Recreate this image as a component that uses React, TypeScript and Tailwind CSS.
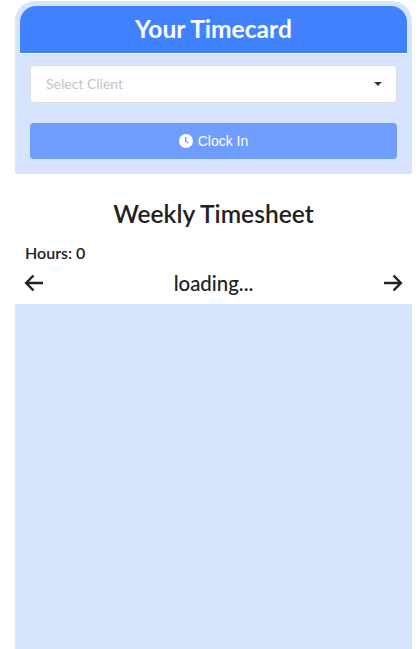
function ClockIcon() {
  return (
    <svg viewBox="0 0 14 14" className="w-[14px] h-[14px]">
      <circle cx="7" cy="7" r="7" fill="#fff" />
      <path d="M6 3v4.6l3 1.9 .7-1.1L7.4 7V3z" fill="#6f9dff" />
    </svg>
  )
}

function Arrow({ flip }: { flip?: boolean }) {
  return (
    <svg viewBox="0 0 20 18" className={flip ? "w-[20px] h-[18px] -scale-x-100" : "w-[20px] h-[18px]"}>
      <path d="M19 9H3M9.5 1.5 2.2 9l7.3 7.5" fill="none" stroke="#212121" strokeWidth="2.5" />
    </svg>
  )
}

export default function App() {
  return (
    <div className="h-[649px] overflow-hidden bg-white pl-[15px] pr-[7px] font-['Lato',sans-serif]">
      <div className="mt-px">
        <section className="pt-[5px] px-[5px] bg-[#d7e4fe] rounded-t-[20px] h-[173px]">
          <h1 className="h-[47px] pb-[1px] flex items-center justify-center rounded-t-[16px] bg-[#3f81ff] text-white text-[24.6px] font-bold">
            Your Timecard
          </h1>
          <div className="h-px bg-white" />
          <div className="px-[10px] pt-[11px]">
            <div className="h-[38px] pb-[2px] flex items-center justify-between pl-[15px] pr-[14px] bg-white border border-[#dedede] rounded-[3px] text-[14px] text-[#c2c2c2]">
              <span>Select Client</span>
              <span className="mt-[2px] w-0 h-0 border-x-[4px] border-x-transparent border-t-[4px] border-t-[#333]" />
            </div>
            <button className="mt-[20px] w-full h-[36px] flex items-center justify-center gap-[5px] rounded-[4px] bg-[#6f9dff] text-white text-[14px] font-['Liberation_Sans',sans-serif]">
              <ClockIcon />
              Clock In
            </button>
          </div>
        </section>

        <h2 className="mt-[25px] text-center text-[24.6px] leading-[30px] font-semibold text-[#212121]">Weekly Timesheet</h2>
        <p className="mt-[14px] pl-[10px] text-[16px] leading-[20px] font-semibold text-[#212121]">Hours: 0</p>
        <div className="mt-[1px] h-[40px] pb-[2px] flex items-center justify-between px-[9px] text-[#212121]">
          <Arrow />
          <span className="text-[20.4px] font-medium">loading...</span>
          <Arrow flip />
        </div>
        <div className="h-[345px] bg-[#d7e4fe]" />
      </div>
    </div>
  )
}
